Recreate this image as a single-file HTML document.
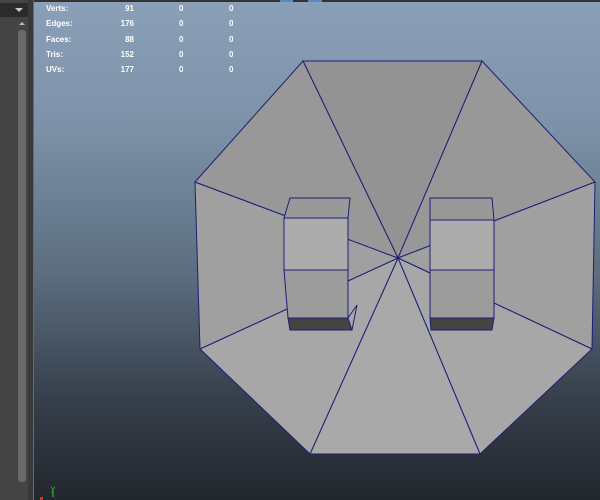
<!DOCTYPE html>
<html><head><style>
body{margin:0;width:600px;height:500px;overflow:hidden;background:#444;font-family:"Liberation Sans",sans-serif;}
#left{position:absolute;left:0;top:0;width:28px;height:500px;background:#444;}
#hdr{position:absolute;left:0;top:3px;width:28px;height:14px;background:#2b2b2b;}
#sep{position:absolute;left:28px;top:0;width:5px;height:500px;background:#393939;border-right:1px solid #6a6a6a;}
#vp{position:absolute;left:34px;top:0;width:566px;height:500px;background:linear-gradient(#8aa0b8 0%,#7d92a8 25%,#5c6d7f 55%,#363f4b 80%,#22272e 100%);}
.st{position:absolute;color:#fff;font-size:8px;font-weight:bold;}
</style></head><body>
<div id="left">
<div id="hdr"></div>
<div style="position:absolute;left:15px;top:8px;width:0;height:0;border-left:4px solid transparent;border-right:4px solid transparent;border-top:4px solid #ccc"></div>
<div style="position:absolute;left:19px;top:22px;width:0;height:0;border-left:3px solid transparent;border-right:3px solid transparent;border-bottom:3px solid #bbb"></div>
<div style="position:absolute;left:18px;top:30px;width:8px;height:452px;background:#6a6a6a;border-radius:3px"></div>
</div>
<div id="sep"></div>
<div id="vp"></div>
<div style="position:absolute;left:34px;top:0;width:566px;height:2px;background:#333"></div>
<div style="position:absolute;left:280px;top:0;width:13px;height:2px;background:#5a8ac0"></div>
<div style="position:absolute;left:308px;top:0;width:14px;height:2px;background:#5a8ac0"></div>
<div class="st" style="left:46px;top:4px">Verts:</div><div class="st" style="left:46px;top:19px">Edges:</div><div class="st" style="left:46px;top:35px">Faces:</div><div class="st" style="left:46px;top:50px">Tris:</div><div class="st" style="left:46px;top:65px">UVs:</div>
<div class="st" style="left:110px;width:24px;text-align:right;top:4px">91</div><div class="st" style="left:110px;width:24px;text-align:right;top:19px">176</div><div class="st" style="left:110px;width:24px;text-align:right;top:35px">88</div><div class="st" style="left:110px;width:24px;text-align:right;top:50px">152</div><div class="st" style="left:110px;width:24px;text-align:right;top:65px">177</div>
<div class="st" style="left:179px;top:4px">0</div><div class="st" style="left:179px;top:19px">0</div><div class="st" style="left:179px;top:35px">0</div><div class="st" style="left:179px;top:50px">0</div><div class="st" style="left:179px;top:65px">0</div>
<div class="st" style="left:229px;top:4px">0</div><div class="st" style="left:229px;top:19px">0</div><div class="st" style="left:229px;top:35px">0</div><div class="st" style="left:229px;top:50px">0</div><div class="st" style="left:229px;top:65px">0</div>
<svg width="600" height="500" style="position:absolute;left:0;top:0">
<g stroke="#1e1e78" stroke-width="1">
<polygon points="303,61 482,61 398,258" fill="#939393"/>
<polygon points="482,61 595,182 398,258" fill="#989898"/>
<polygon points="595,182 592,349 398,258" fill="#a0a0a0"/>
<polygon points="592,349 480,454 398,258" fill="#a7a7a7"/>
<polygon points="480,454 310,454 398,258" fill="#a9a9a9"/>
<polygon points="310,454 200,349 398,258" fill="#a7a7a7"/>
<polygon points="200,349 195,182 398,258" fill="#a0a0a0"/>
<polygon points="195,182 303,61 398,258" fill="#989898"/>
</g>
<g stroke="#1e1e78" stroke-width="1">
<polygon points="290,198 350,198 348,218 284,218" fill="#999"/>
<polygon points="284,218 348,218 348,270 284,270" fill="#acacac"/>
<polygon points="284,270 348,270 348,318 288,318" fill="#9c9c9c"/>
<polygon points="288,318 348,318 352,330 290,330" fill="#444"/>
<polyline points="348,318 357,305 352,330" fill="none"/>
<polygon points="430,198 492,198 494,220 430,220" fill="#999"/>
<polygon points="430,220 494,220 494,270 430,270" fill="#acacac"/>
<polygon points="430,270 494,270 494,318 430,318" fill="#9c9c9c"/>
<polygon points="430,318 494,318 492,330 431,330" fill="#444"/>
</g>
<line x1="53" y1="498" x2="53" y2="490" stroke="#22c" stroke-width="1"/>
<line x1="53" y1="492" x2="53" y2="497" stroke="#3c3" stroke-width="1"/>
<text x="51" y="491" fill="#3c3" font-size="8" font-family="Liberation Sans">y</text>
<rect x="40" y="497" width="3" height="3" fill="#c33"/>
</svg>
</body></html>
